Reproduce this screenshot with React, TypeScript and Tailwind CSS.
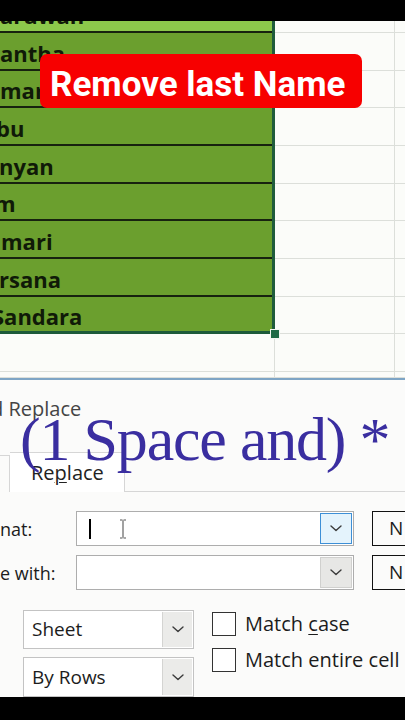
import React from "react";

type SheetRow = {
  height: string;
  text: string;
  offset: string;
  fill: string;
  last?: boolean;
};

const sheetRows: SheetRow[] = [
  { height: "h-[12px]", text: "aruwan", offset: "ml-0", fill: "bg-[#8cc84b]" },
  { height: "h-[38px]", text: "antha", offset: "ml-0", fill: "bg-[#6b9f2e]" },
  { height: "h-[37px]", text: "mar", offset: "ml-0", fill: "bg-[#6b9f2e]" },
  { height: "h-[38px]", text: "bu", offset: "-ml-[4px]", fill: "bg-[#6b9f2e]" },
  { height: "h-[38px]", text: "nyan", offset: "-ml-[1px]", fill: "bg-[#6b9f2e]" },
  { height: "h-[37px]", text: "m", offset: "-ml-[6px]", fill: "bg-[#6b9f2e]" },
  { height: "h-[38px]", text: "mari", offset: "ml-[1px]", fill: "bg-[#6b9f2e]" },
  { height: "h-[38px]", text: "rsana", offset: "-ml-[1px]", fill: "bg-[#6b9f2e]" },
  { height: "h-[37px]", text: "Sandara", offset: "-ml-[8px]", fill: "bg-[#6b9f2e]", last: true },
];

const Chevron: React.FC<{ className?: string }> = ({ className }) => (
  <svg viewBox="0 0 12 7" className={className} fill="none">
    <path d="M1 1l5 4.5L11 1" stroke="#3a3a3a" strokeWidth="1.4" strokeLinecap="round" strokeLinejoin="round" />
  </svg>
);

const GreenRow: React.FC<{ row: SheetRow }> = ({ row }) => (
  <div className={`flex ${row.height} shrink-0`}>
    <div
      className={`w-[272px] shrink-0 flex items-end ${row.fill} ${
        row.last ? "border-b-[3px] border-[#1d5a3a] pb-[4px]" : "border-b-2 border-[#17220f] pb-[5px]"
      }`}
    >
      <span className={`${row.offset} whitespace-nowrap text-[22px] leading-[22px] font-bold text-[#101a08]`}>
        {row.text}
      </span>
    </div>
    <div className="w-[3px] shrink-0 bg-[#1f5c3c]" />
    <div className="w-[120px] shrink-0 border-r border-b border-[#dcdfda]" />
    <div className="flex-1 border-b border-[#dcdfda]" />
  </div>
);

const WhiteRow: React.FC<{ height: string }> = ({ height }) => (
  <div className={`flex ${height} shrink-0`}>
    <div className="w-[272px] shrink-0 border-b border-[#dcdfda]" />
    <div className="w-[3px] shrink-0 border-r border-b border-[#dcdfda]" />
    <div className="w-[120px] shrink-0 border-r border-b border-[#dcdfda]" />
    <div className="flex-1 border-b border-[#dcdfda]" />
  </div>
);

const ComboBox: React.FC<{ active?: boolean; children?: React.ReactNode }> = ({ active, children }) => (
  <div className="relative flex h-[35px] w-[278px] shrink-0 border border-[#adadad] bg-white">
    <div className="flex-1">{children}</div>
    <div
      className={`my-[1px] mr-[1px] flex w-[32px] items-center justify-center ${
        active ? "border-[1.5px] border-[#3d8fd6] bg-[#e4f3fc]" : "border border-[#d0d0ce] bg-[#e7e7e5]"
      }`}
    >
      <Chevron className="h-[7px] w-[12px]" />
    </div>
  </div>
);

const SelectBox: React.FC<{ label: string; height: string }> = ({ label, height }) => (
  <div className={`flex ${height} w-[171px] border border-[#c3c3c3] bg-white`}>
    <div className="flex flex-1 items-center pl-[8px] text-[19px] text-[#1c1c1c]">{label}</div>
    <div className="m-[1px] flex w-[30px] items-center justify-center border-l border-[#d4d4d2] bg-[#ebebe9]">
      <Chevron className="h-[7px] w-[12px]" />
    </div>
  </div>
);

const CheckRow: React.FC<{ children: React.ReactNode }> = ({ children }) => (
  <div className="flex h-[24px] items-center">
    <div className="h-[24px] w-[24px] shrink-0 border-[1.5px] border-[#333] bg-white" />
    <span className="ml-[9px] whitespace-nowrap text-[20px] leading-[24px] text-[#1c1c1c]">{children}</span>
  </div>
);

const NButton: React.FC = () => (
  <div className="ml-[18px] flex h-[35px] w-[60px] shrink-0 items-center border-[1.5px] border-[#111] pl-[16px] text-[19px]">
    N
  </div>
);

export default function App() {
  return (
    <div
      className="flex h-[720px] w-[405px] flex-col overflow-hidden bg-black"
      style={{ fontFamily: '"Open Sans", "Noto Sans", sans-serif' }}
    >
      <div className="h-[21px] shrink-0 bg-black" />

      {/* spreadsheet */}
      <div className="relative flex h-[357px] shrink-0 flex-col overflow-hidden bg-[#fbfcf9]">
        {sheetRows.map((row) => (
          <GreenRow key={row.text} row={row} />
        ))}
        <WhiteRow height="h-[38px]" />
        <WhiteRow height="h-[6px]" />

        <div className="absolute left-[270px] top-[308px] h-[10px] w-[10px] border border-[#f4f8f2] bg-[#1f6b46]" />

        <div className="absolute left-[40px] top-[33px] flex h-[54px] w-[322px] items-start rounded-[7px] bg-[#f70000] pl-[10px] pt-[13px]">
          <span
            className="whitespace-nowrap text-[35px] font-bold leading-[35px] text-white"
            style={{ fontFamily: "Roboto, sans-serif" }}
          >
            Remove last Name
          </span>
        </div>
      </div>

      {/* find & replace dialog */}
      <div className="relative flex h-[319px] shrink-0 flex-col overflow-hidden border-t-2 border-[#7ea5c5] bg-[#fbfbfa] text-[#1c1c1c]">
        <div className="-ml-[9px] mt-[17px] h-[24px] whitespace-nowrap text-[20px] leading-[24px] text-[#444]">
          d Replace
        </div>

        <div className="mt-[31px] flex h-[40px]">
          <div className="mt-[3px] w-[10px] shrink-0 border-r border-t border-[#d6d6d6]" />
          <div className="w-[115px] shrink-0 border-r border-t border-[#d6d6d6] bg-white pl-[21px] pt-[8px] text-[20px] leading-[24px] text-[#222]">
            Re<span className="underline decoration-1 underline-offset-[2px]">p</span>lace
          </div>
          <div className="flex-1 border-b border-[#d6d6d6]" />
        </div>

        <div className="mt-[19px] flex h-[35px] items-center">
          <div className="w-[76px] shrink-0 pt-[2px] text-[18px]">nat:</div>
          <ComboBox active>
            <div className="absolute left-[12px] top-[7px] h-[20px] w-[2px] bg-black" />
            <svg viewBox="0 0 8 20" className="absolute left-[42px] top-[7px] h-[20px] w-[8px]" fill="none">
              <path d="M1 1h2.5M4.5 1H7M4 1.5v17M1 19h2.5M4.5 19H7" stroke="#555" strokeWidth="1.1" />
            </svg>
          </ComboBox>
          <NButton />
        </div>

        <div className="mt-[9px] flex h-[35px] items-center">
          <div className="w-[76px] shrink-0 whitespace-nowrap pt-[2px] text-[18px]">e with:</div>
          <ComboBox />
          <NButton />
        </div>

        <div className="mt-[20px] flex">
          <div className="ml-[23px] flex shrink-0 flex-col gap-[8px]">
            <SelectBox label="Sheet" height="h-[39px]" />
            <SelectBox label="By Rows" height="h-[40px]" />
          </div>
          <div className="ml-[18px] flex flex-col gap-[12px] pt-[2px]">
            <CheckRow>
              Match <span className="underline decoration-1 underline-offset-[3px]">c</span>ase
            </CheckRow>
            <CheckRow>Match entire cell</CheckRow>
          </div>
        </div>

        <div
          className="absolute left-[20px] top-[28px] whitespace-nowrap text-[62px] leading-[62px] tracking-[-1.2px] text-[#3a2ea0]"
          style={{ fontFamily: '"Liberation Serif", serif' }}
        >
          (1 Space and) *
        </div>
      </div>

      <div className="flex-1 bg-black" />
    </div>
  );
}
